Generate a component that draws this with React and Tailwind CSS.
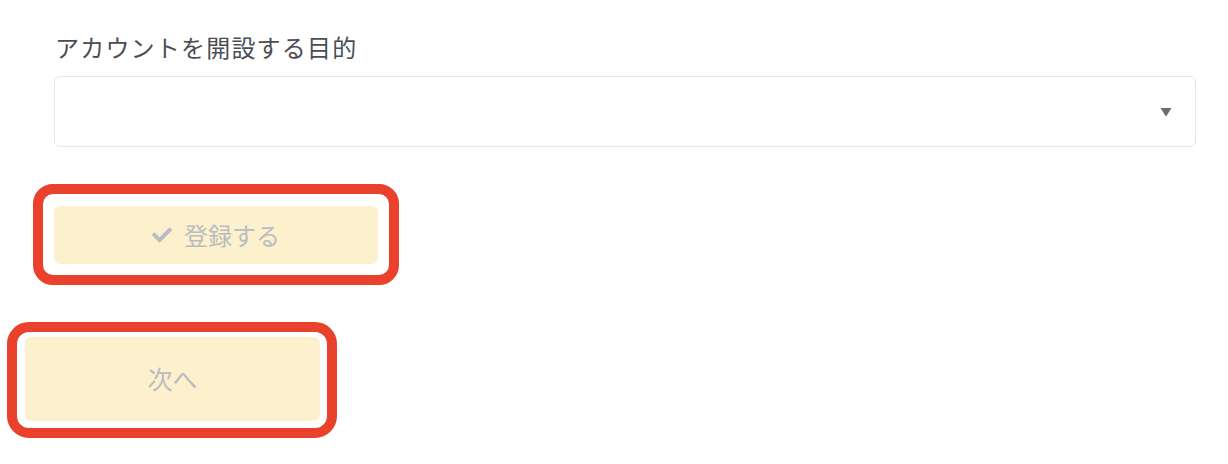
import React from "react";
import { FaCheck } from "react-icons/fa";

const font = { fontFamily: '"Noto Sans CJK JP", "Noto Sans", sans-serif' };

export default function App() {
  return (
    <div className="w-[1228px] h-[464px] bg-white flex flex-col pt-[31px]" style={font}>
      <label className="ml-[55px] text-[24px] leading-[32px] text-[#4a4e55] tracking-[1.2px]">
        アカウントを開設する目的
      </label>

      <div className="ml-[54px] mr-[32px] mt-[13px] h-[71px] border border-[#e6e7ea] rounded-[6px] flex items-center justify-end pr-[23px]">
        <svg width="12" height="10" viewBox="0 0 12 10">
          <path d="M0.5 1 H11.5 L6.8 8.6 Q6 9.6 5.2 8.6 Z" fill="#6b6e75" />
        </svg>
      </div>

      <div className="ml-[33px] mt-[37px] w-[366px] border-[10px] border-[#e9412b] rounded-[20px] pt-[12px] pb-[11px] pl-[11px] pr-[11px]">
        <button
          disabled
          className="w-[324px] h-[58px] rounded-[6px] bg-[#fdf0cd] text-[#b9bcc0] text-[24px] flex items-center justify-center gap-[12px]"
        >
          <FaCheck size={20} className="shrink-0" />
          <span>登録する</span>
        </button>
      </div>

      <div className="ml-[7px] mt-[37px] w-[330px] border-[10px] border-[#e9412b] rounded-[22px] pt-[5px] pb-[7px] pl-[8px] pr-[7px]">
        <button
          disabled
          className="w-[295px] h-[84px] rounded-[6px] bg-[#fdf0cd] text-[#b9bcc0] text-[25px] flex items-center justify-center"
        >
          次へ
        </button>
      </div>
    </div>
  );
}
